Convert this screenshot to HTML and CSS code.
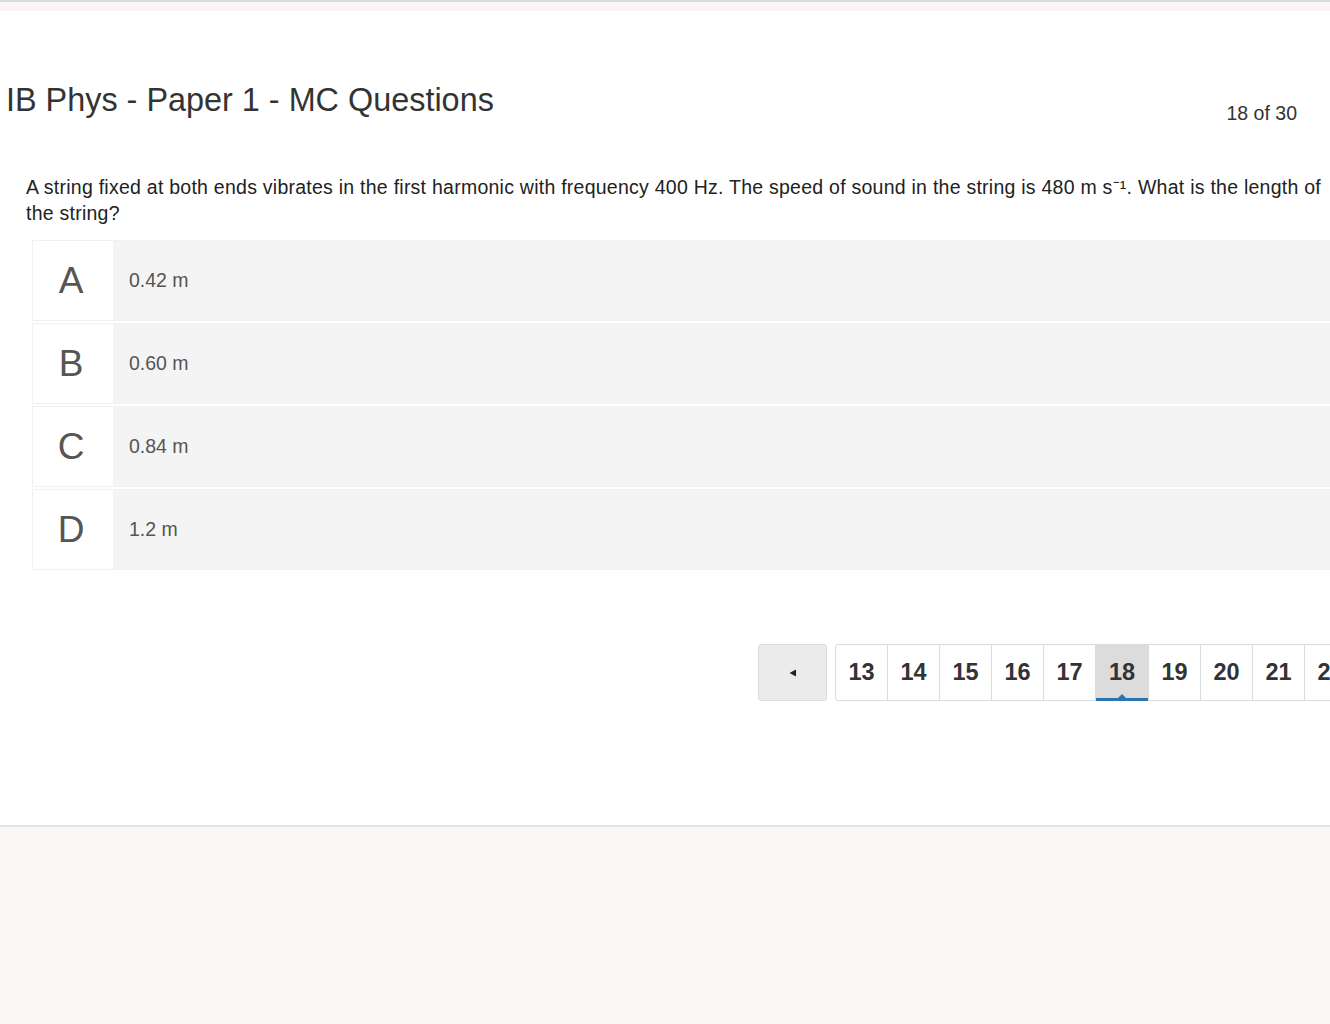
FILE: index.html
```html
<!DOCTYPE html>
<html>
<head>
<meta charset="utf-8">
<link rel="stylesheet" href="styles.css">
</head>
<body>
<div class="topbar"></div>
<div class="topband"></div>
<main class="page">
  <header class="head">
    <h1 class="title">IB Phys - Paper 1 - MC Questions</h1>
    <div class="count">18 of 30</div>
  </header>
  <p class="question">A string fixed at both ends vibrates in the first harmonic with frequency 400 Hz. The speed of sound in the string is 480 m s⁻¹. What is the length of the string?</p>
  <div class="options">
    <div class="opt"><div class="letter">A</div><div class="ans">0.42 m</div></div>
    <div class="opt"><div class="letter">B</div><div class="ans">0.60 m</div></div>
    <div class="opt"><div class="letter">C</div><div class="ans">0.84 m</div></div>
    <div class="opt"><div class="letter">D</div><div class="ans">1.2 m</div></div>
  </div>
  <nav class="pager">
    <div class="prev"><svg width="10" height="10" viewBox="0 0 10 10"><path d="M8 1.5 L1.5 5 L8 8.5 Z" fill="#222"/></svg></div>
    <div class="pages">
      <div class="pg">13</div>
      <div class="pg">14</div>
      <div class="pg">15</div>
      <div class="pg">16</div>
      <div class="pg">17</div>
      <div class="pg active">18</div>
      <div class="pg">19</div>
      <div class="pg">20</div>
      <div class="pg">21</div>
      <div class="pg">22</div>
    </div>
  </nav>
</main>
<footer class="foot"></footer>
</body>
</html>
```

FILE: styles.css
```css
html, body {
  margin: 0;
  padding: 0;
  overflow: hidden;
  background: #f9f8f7;
}
body {
  font-family: "Liberation Sans", Arial, sans-serif;
  color: #333;
  width: 1330px;
  height: 1024px;
}
.topbar {
  height: 2px;
  background: #d9dddd;
}
.topband {
  height: 8px;
  margin-top: 1px;
  background: #fcf5f5;
}
.page {
  background: #fff;
  height: 814px;
  border-bottom: 2px solid #e2e2e2;
  box-shadow: 0 2px 3px rgba(0,0,0,0.04);
  overflow: hidden;
}
.head {
  display: flex;
  justify-content: space-between;
  align-items: flex-start;
  padding: 0 33px 0 6px;
  height: 163px;
}
.title {
  margin: 71px 0 0 0;
  font-weight: normal;
  font-size: 32.4px;
  color: #333;
}
.count {
  margin-top: 91px;
  font-size: 19.5px;
  color: #333;
}
.question {
  margin: 0 0 0 26px;
  width: 1302px;
  font-size: 19.5px;
  letter-spacing: 0.25px;
  line-height: 26px;
  color: #222;
}
.options {
  margin: 14px 0 0 32px;
  width: 1320px;
  display: flex;
  flex-direction: column;
  gap: 2px;
}
.opt {
  display: flex;
  height: 81px;
  border: 1px solid #f1f1f1;
  box-sizing: border-box;
}
.letter {
  width: 80px;
  flex: none;
  box-sizing: border-box;
  padding-right: 4px;
  background: #fff;
  display: flex;
  align-items: center;
  justify-content: center;
  font-size: 37px;
  color: #555;
}
.ans {
  flex: 1;
  background: #f4f4f4;
  display: flex;
  align-items: center;
  padding-left: 16px;
  font-size: 19.5px;
  color: #555;
}
.pager {
  display: flex;
  margin: 74px 0 0 758px;
  gap: 8px;
  width: 900px;
}
.prev {
  width: 67px;
  height: 55px;
  background: #ebebeb;
  border: 1px solid #dcdcdc;
  border-radius: 3px;
  display: flex;
  align-items: center;
  justify-content: center;
  flex: none;
}
.pages {
  display: flex;
  border: 1px solid #dcdcdc;
  border-radius: 3px;
  height: 55px;
  flex: none;
}
.pg {
  width: 52px;
  height: 55px;
  border-right: 1px solid #dcdcdc;
  display: flex;
  align-items: center;
  justify-content: center;
  font-size: 23.5px;
  font-weight: bold;
  color: #333;
  position: relative;
  box-sizing: border-box;
}
.pg.active {
  background: #dcdcdc;
  width: 53px;
}
.pg.active::before {
  content: "";
  position: absolute;
  left: 0;
  right: 0;
  bottom: -1px;
  height: 3px;
  background: #2c74ad;
}
.pg.active::after {
  content: "";
  position: absolute;
  left: 50%;
  bottom: 1px;
  margin-left: -5px;
  border-left: 5px solid transparent;
  border-right: 5px solid transparent;
  border-bottom: 5px solid #2c74ad;
}
.foot {
  height: 200px;
  background: #f9f8f7;
}
```
